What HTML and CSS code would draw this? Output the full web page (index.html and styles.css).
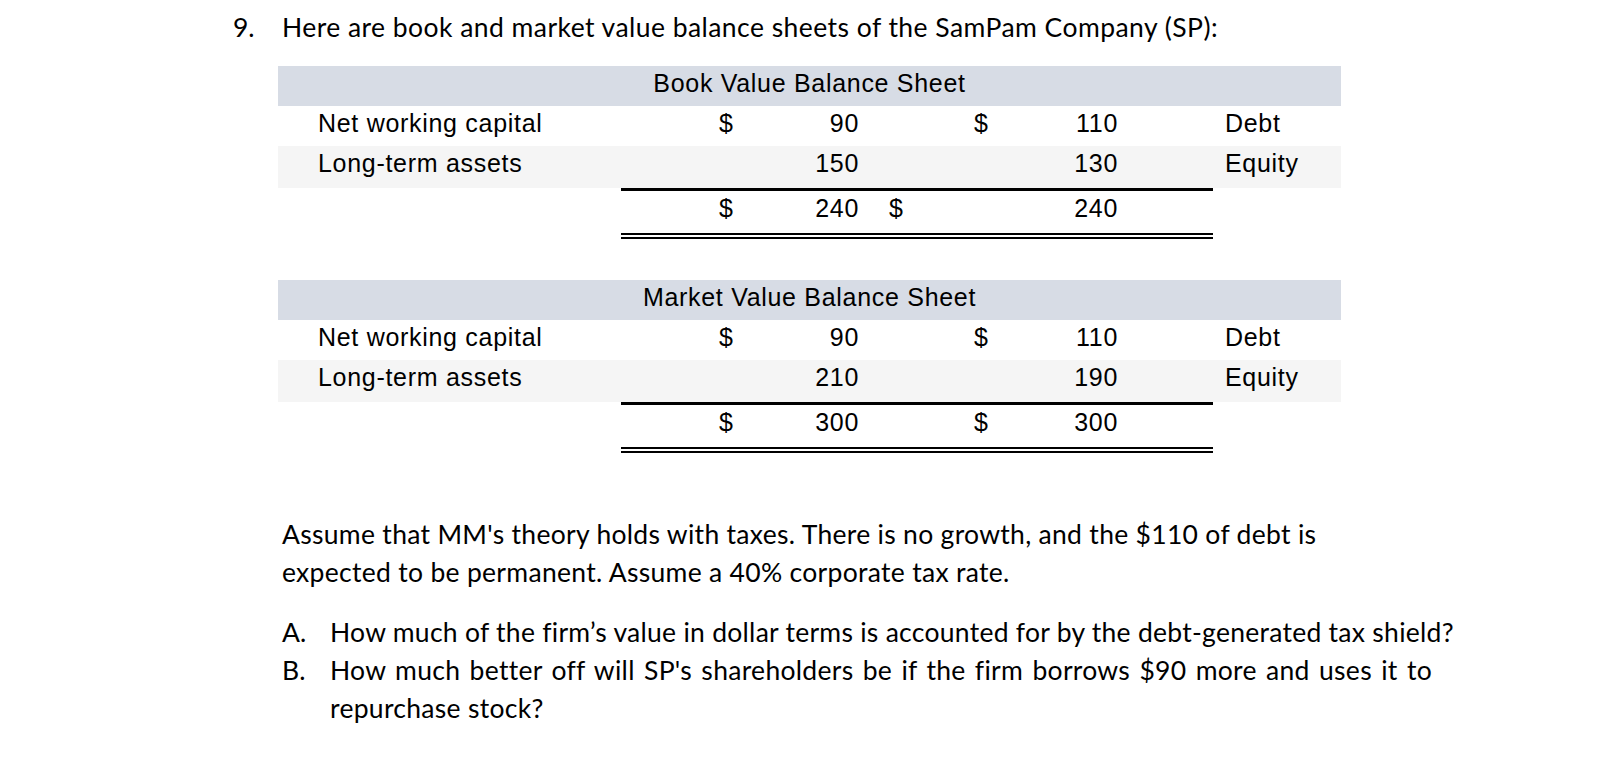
FILE: index.html
```html
<!DOCTYPE html>
<html>
<head>
<meta charset="utf-8">
<link rel="stylesheet" href="styles.css">
</head>
<body>
<div class="page">
  <div class="title"><span class="num">9.</span><span>Here are book and market value balance sheets of the SamPam Company (SP):</span></div>

  <div class="sheet book">
    <div class="band">Book Value Balance Sheet</div>
    <div class="row">
      <div class="lbl">Net working capital</div>
      <div class="amt"><span>$</span><span>90</span></div>
      <div class="mid"></div>
      <div class="amt2"><span>$</span><span>110</span></div>
      <div class="side">Debt</div>
    </div>
    <div class="row alt">
      <div class="lbl">Long-term assets</div>
      <div class="amt"><span></span><span>150</span></div>
      <div class="mid"></div>
      <div class="amt2"><span></span><span>130</span></div>
      <div class="side">Equity</div>
    </div>
    <div class="total">
      <div class="tbox">
        <div class="amt"><span>$</span><span>240</span></div>
        <div class="mid">$</div>
        <div class="amt2"><span></span><span>240</span></div>
      </div>
    </div>
  </div>

  <div class="sheet market">
    <div class="band">Market Value Balance Sheet</div>
    <div class="row">
      <div class="lbl">Net working capital</div>
      <div class="amt"><span>$</span><span>90</span></div>
      <div class="mid"></div>
      <div class="amt2"><span>$</span><span>110</span></div>
      <div class="side">Debt</div>
    </div>
    <div class="row alt">
      <div class="lbl">Long-term assets</div>
      <div class="amt"><span></span><span>210</span></div>
      <div class="mid"></div>
      <div class="amt2"><span></span><span>190</span></div>
      <div class="side">Equity</div>
    </div>
    <div class="total">
      <div class="tbox">
        <div class="amt"><span>$</span><span>300</span></div>
        <div class="mid"></div>
        <div class="amt2"><span>$</span><span>300</span></div>
      </div>
    </div>
  </div>

  <div class="para">
    <div class="line">Assume that MM's theory holds with taxes. There is no growth, and the $110 of debt is</div>
    <div class="line">expected to be permanent. Assume a 40% corporate tax rate.</div>
  </div>

  <div class="qs">
    <div class="q"><span class="qn">A.</span><span class="qt tight">How much of the firm’s value in dollar terms is accounted for by the debt-generated tax shield?</span></div>
    <div class="q"><span class="qn">B.</span><span class="qt just">How much better off will SP's shareholders be if the firm borrows $90 more and uses it to</span></div>
    <div class="q"><span class="qn"></span><span class="qt">repurchase stock?</span></div>
  </div>
</div>
</body>
</html>
```

FILE: styles.css
```css
html, body {
  margin: 0;
  padding: 0;
  background: #ffffff;
}

.page {
  padding: 12px 0 0 233px;
  color: #000;
}

.title {
  display: flex;
  font-family: "Lato", "Liberation Sans", sans-serif;
  font-size: 26.5px;
  letter-spacing: 0.45px;
  line-height: 30px;
  white-space: nowrap;
}

.title .num {
  width: 49px;
  flex: none;
  letter-spacing: 0;
}

.sheet {
  margin-left: 45px;
  width: 1063px;
  font-family: "Liberation Sans", Arial, sans-serif;
  font-size: 25px;
  letter-spacing: 0.7px;
  line-height: 35px;
  white-space: nowrap;
}

.book {
  margin-top: 24px;
}

.market {
  margin-top: 41px;
}

.band {
  background: #d7dce5;
  height: 35px;
  padding-bottom: 5px;
  text-align: center;
}

.row {
  display: grid;
  grid-template-columns: 343px 241px 108px 243px 128px;
  height: 35px;
  padding-bottom: 5px;
}

.row.alt {
  background: #f5f5f5;
  padding-bottom: 7px;
}

.lbl {
  padding-left: 40px;
}

.amt {
  display: flex;
  justify-content: space-between;
  padding-left: 98px;
  padding-right: 3px;
}

.mid {
  padding-left: 27px;
}

.amt2 {
  display: flex;
  justify-content: space-between;
  padding-left: 4px;
  padding-right: 95px;
}

.side {
  padding-left: 12px;
}

.total {
  display: flex;
  padding-left: 343px;
}

.tbox {
  display: grid;
  grid-template-columns: 241px 108px 243px;
  width: 592px;
  border-top: 3px solid #000;
  border-bottom: 6px double #000;
  height: 35px;
  padding-bottom: 7px;
}

.para {
  margin-top: 62px;
  margin-left: 49px;
  font-family: "Lato", "Liberation Sans", sans-serif;
  font-size: 26.5px;
  letter-spacing: 0.3px;
  line-height: 38px;
  white-space: nowrap;
}

.qs {
  margin-top: 22px;
  margin-left: 49px;
  font-family: "Lato", "Liberation Sans", sans-serif;
  font-size: 26.5px;
  letter-spacing: 0.3px;
  line-height: 38px;
  white-space: nowrap;
}

.q {
  display: flex;
}

.qn {
  width: 48px;
  flex: none;
  letter-spacing: 0;
}

.qt.tight {
  letter-spacing: 0.27px;
}

.qt.just {
  width: 1102px;
  white-space: normal;
  text-align: justify;
  text-align-last: justify;
}
```
